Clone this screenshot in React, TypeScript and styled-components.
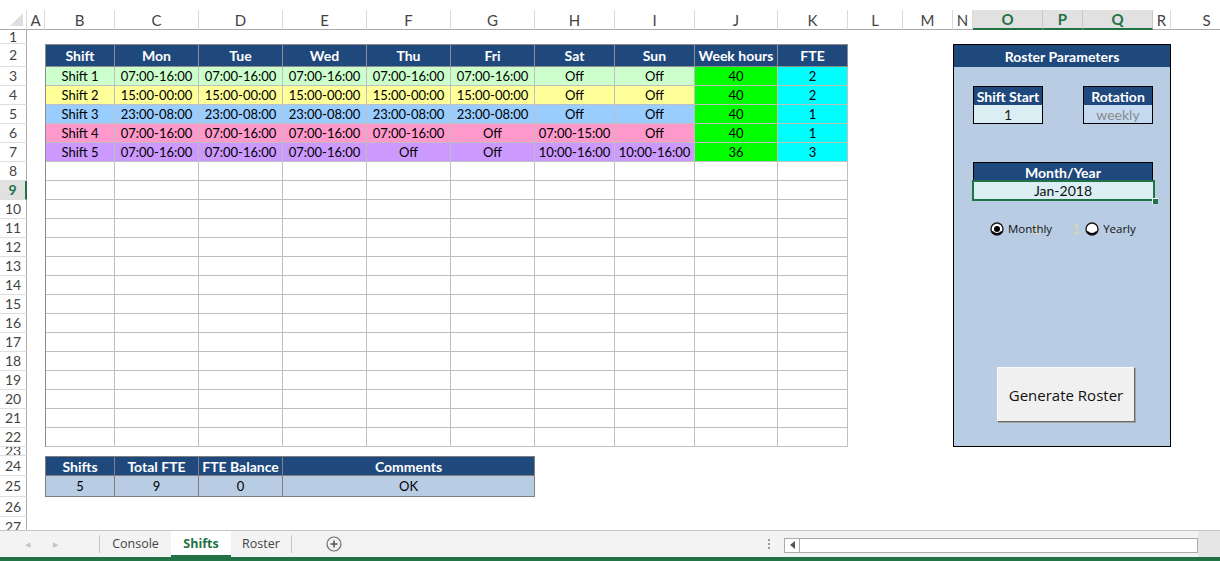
import React from 'react';
import styled, { createGlobalStyle } from 'styled-components';

const GlobalStyle = createGlobalStyle`
  html, body { margin: 0; padding: 0; background: #fff; }
  body {
    width: 1220px; height: 561px; overflow: hidden;
    font-family: Lato, "Liberation Sans", sans-serif;
  }
  #root { height: 100%; }
`;

const NAVY = '#1f497d';
const XL_GREEN = '#217346';

const COL_WIDTHS = [18, 70, 84, 84, 84, 84, 84, 80, 80, 83, 70, 55, 50, 20, 70, 40, 70, 18, 72];
const LETTERS = 'ABCDEFGHIJKLMNOPQRS'.split('');
const SELECTED_COLS = ['O', 'P', 'Q'];
const ROW_HEIGHTS = [14, 23, ...Array(20).fill(19), 9, 20, 21, 20, 20];
const SHEET_COLS = COL_WIDTHS.map((w) => `${w}px`).join(' ');
const SHEET_ROWS = ROW_HEIGHTS.map((h) => `${h}px`).join(' ');

type ShiftRow = { name: string; bg: string; days: string[]; hours: number; fte: number };

const T1 = '07:00-16:00';
const T2 = '15:00-00:00';
const T3 = '23:00-08:00';
const SHIFTS: ShiftRow[] = [
  { name: 'Shift 1', bg: '#ccffcc', days: [T1, T1, T1, T1, T1, 'Off', 'Off'], hours: 40, fte: 2 },
  { name: 'Shift 2', bg: '#ffff99', days: [T2, T2, T2, T2, T2, 'Off', 'Off'], hours: 40, fte: 2 },
  { name: 'Shift 3', bg: '#99ccff', days: [T3, T3, T3, T3, T3, 'Off', 'Off'], hours: 40, fte: 1 },
  { name: 'Shift 4', bg: '#ff99cc', days: [T1, T1, T1, T1, 'Off', '07:00-15:00', 'Off'], hours: 40, fte: 1 },
  { name: 'Shift 5', bg: '#cc99ff', days: [T1, T1, T1, 'Off', 'Off', '10:00-16:00', '10:00-16:00'], hours: 36, fte: 3 },
];
const HEADERS = ['Shift', 'Mon', 'Tue', 'Wed', 'Thu', 'Fri', 'Sat', 'Sun', 'Week hours', 'FTE'];

/* ---------- window frame ---------- */

const Window = styled.div`
  width: 1220px;
  height: 561px;
  display: flex;
  flex-direction: column;
  overflow: hidden;
`;

const Sheet = styled.div`
  height: 530px;
  flex-shrink: 0;
  overflow: hidden;
  padding-top: 10px;
  box-sizing: border-box;
`;

const HeaderRow = styled.div`
  display: grid;
  grid-template-columns: 27px ${SHEET_COLS};
  height: 20px;
`;

const Corner = styled.div`
  box-sizing: border-box;
  border-right: 1px solid #dadada;
  border-bottom: 1px solid #ababab;
  display: flex;
  align-items: flex-end;
  justify-content: flex-end;
  padding: 0 3px 3px 0;
`;

const CornerTriangle = styled.div`
  width: 0;
  height: 0;
  border-left: 13px solid transparent;
  border-bottom: 13px solid #dfdfdf;
`;

const ColHead = styled.div<{ $selected?: boolean }>`
  box-sizing: border-box;
  border-right: 1px solid ${(p) => (p.$selected ? '#c8c8c8' : '#dadada')};
  border-bottom: ${(p) => (p.$selected ? `2px solid ${XL_GREEN}` : '1px solid #ababab')};
  background: ${(p) => (p.$selected ? '#e1e1e1' : '#fff')};
  color: ${(p) => (p.$selected ? XL_GREEN : '#444')};
  font-weight: ${(p) => (p.$selected ? 700 : 400)};
  font-size: 15px;
  display: flex;
  align-items: center;
  justify-content: center;
  white-space: nowrap;
`;

const Body = styled.div`
  display: flex;
`;

const RowHeads = styled.div`
  width: 27px;
  flex-shrink: 0;
  display: grid;
  grid-template-rows: ${SHEET_ROWS};
`;

const RowHead = styled.div<{ $selected?: boolean }>`
  box-sizing: border-box;
  border-bottom: 1px solid #dedede;
  border-right: ${(p) => (p.$selected ? `2px solid ${XL_GREEN}` : '1px solid #ababab')};
  background: ${(p) => (p.$selected ? '#e1e1e1' : '#fff')};
  color: ${(p) => (p.$selected ? XL_GREEN : '#444')};
  font-weight: ${(p) => (p.$selected ? 700 : 400)};
  font-size: 14px;
  display: flex;
  align-items: center;
  justify-content: center;
  overflow: hidden;
  line-height: 1;
`;

const Canvas = styled.div`
  display: grid;
  grid-template-columns: ${SHEET_COLS};
  grid-template-rows: ${SHEET_ROWS};
`;

/* ---------- tables ---------- */

const ShiftGrid = styled.div`
  grid-column: 2 / 12;
  grid-row: 2 / 23;
  display: grid;
  grid-template-columns: 69px 84px 84px 84px 84px 84px 80px 80px 83px 70px;
  grid-template-rows: 22px repeat(20, 19px);
  border-left: 1px solid #8c8c8c;
  border-top: 1px solid #8c8c8c;
  box-sizing: border-box;
`;

const Cell = styled.div<{ $bg?: string; $line?: string }>`
  box-sizing: border-box;
  border-right: 1px solid ${(p) => p.$line ?? '#bfbfbf'};
  border-bottom: 1px solid ${(p) => p.$line ?? '#bfbfbf'};
  background: ${(p) => p.$bg ?? '#fff'};
  color: #000;
  font-size: 13px;
  display: flex;
  align-items: center;
  justify-content: center;
  white-space: nowrap;
  overflow: hidden;
`;

const HeadCell = styled(Cell)`
  background: ${NAVY};
  color: #fff;
  font-weight: 700;
  font-size: 14px;
`;

const SummaryGrid = styled.div`
  grid-column: 2 / 8;
  grid-row: 24 / 26;
  display: grid;
  grid-template-columns: 69px 84px 84px 252px;
  grid-template-rows: 19px 21px;
  border-left: 1px solid #7f7f7f;
  border-top: 1px solid #7f7f7f;
  box-sizing: border-box;
`;

/* ---------- parameters panel ---------- */

const Panel = styled.div`
  grid-column: 14 / 19;
  grid-row: 2 / 23;
  box-sizing: border-box;
  border: 1px solid #000;
  background: #b8cce4;
  display: grid;
  grid-template-columns: 19px 70px 40px 70px 17px;
  grid-template-rows: 22px repeat(19, 19px) 18px;
`;

const PanelTitle = styled.div`
  grid-column: 1 / -1;
  grid-row: 1;
  background: ${NAVY};
  color: #fff;
  font-weight: 700;
  font-size: 14px;
  display: flex;
  align-items: center;
  justify-content: center;
`;

const ParamBox = styled.div<{ $col: number }>`
  grid-column: ${(p) => p.$col};
  grid-row: 3 / 5;
  box-sizing: border-box;
  border: 1px solid #000;
  display: grid;
  grid-template-rows: 18px 18px;
`;

const BoxLabel = styled.div`
  background: ${NAVY};
  color: #fff;
  font-weight: 700;
  font-size: 14px;
  display: flex;
  align-items: center;
  justify-content: center;
  white-space: nowrap;
`;

const BoxValue = styled.div<{ $bg: string; $muted?: boolean }>`
  background: ${(p) => p.$bg};
  color: ${(p) => (p.$muted ? '#8a8a8a' : '#2a1a10')};
  font-size: 14px;
  display: flex;
  align-items: center;
  justify-content: center;
`;

const MonthBlock = styled.div`
  grid-column: 2 / 5;
  grid-row: 7 / 9;
  display: grid;
  grid-template-rows: 19px 19px;
`;

const MonthLabel = styled(BoxLabel)`
  box-sizing: border-box;
  border: 1px solid #000;
  border-bottom: none;
`;

const MonthValue = styled(BoxValue)`
  position: relative;
  color: #111;
`;

const Selection = styled.div`
  position: absolute;
  top: -1px;
  left: -1px;
  right: -2px;
  bottom: -1px;
  border: 2px solid ${XL_GREEN};
  pointer-events: none;
`;

const FillHandle = styled.div`
  position: absolute;
  right: -5px;
  bottom: -5px;
  width: 5px;
  height: 5px;
  background: ${XL_GREEN};
  border: 1px solid #fff;
  border-bottom: none;
  border-right: none;
`;

const RadioRow = styled.div`
  grid-column: 2 / 5;
  grid-row: 10;
  position: relative;
  display: grid;
  grid-template-columns: 70px 40px 70px;
`;

const FaintValue = styled.div`
  color: #dcd8ae;
  font-size: 14px;
  display: flex;
  align-items: center;
  justify-content: flex-end;
  padding-right: 3px;
`;

const RadioLayer = styled.div`
  position: absolute;
  inset: 0;
  display: flex;
  align-items: center;
  padding-left: 17px;
  gap: 33px;
  font-family: "Open Sans", "Noto Sans", sans-serif;
  font-size: 11.5px;
  color: #111;
`;

const RadioOption = styled.label`
  display: flex;
  align-items: center;
  gap: 4px;
`;

const GenerateButton = styled.button`
  grid-column: 2 / 5;
  grid-row: 17 / 21;
  align-self: start;
  justify-self: start;
  margin: 15px 0 0 24px;
  width: 138px;
  height: 55px;
  background: #f0f0f0;
  border: 1px solid;
  border-color: #fafafa #6b6b6b #6b6b6b #fafafa;
  box-shadow: 1px 1px 0 #a0a0a0;
  font-family: "Open Sans", "Noto Sans", sans-serif;
  font-size: 15px;
  color: #111;
  padding: 0;
`;

/* ---------- tab bar ---------- */

const TabBar = styled.div`
  height: 27px;
  flex-shrink: 0;
  box-sizing: border-box;
  border-top: 1px solid #c6c6c6;
  background: #f3f3f3;
  display: flex;
  align-items: stretch;
  font-family: "Open Sans", "Noto Sans", sans-serif;
  font-size: 12.5px;
  color: #444;
`;

const NavBox = styled.div`
  width: 99px;
  display: flex;
  align-items: center;
  padding-left: 25px;
  gap: 23px;
  box-sizing: border-box;
  color: #c4c4c4;
  font-size: 7px;
`;

const Divider = styled.div`
  width: 1px;
  background: #c6c6c6;
  margin: 4px 0 4px;
`;

const Tab = styled.div<{ $active?: boolean; $w: number }>`
  width: ${(p) => p.$w}px;
  box-sizing: border-box;
  display: flex;
  align-items: center;
  justify-content: center;
  background: ${(p) => (p.$active ? '#fff' : 'transparent')};
  color: ${(p) => (p.$active ? XL_GREEN : '#444')};
  font-weight: ${(p) => (p.$active ? 700 : 400)};
  border-bottom: 2px solid ${(p) => (p.$active ? XL_GREEN : 'transparent')};
  padding-top: 1px;
`;

const AddSheet = styled.div`
  margin-left: 34px;
  display: flex;
  align-items: center;
`;

const Dots = styled.div`
  margin-left: auto;
  width: 4px;
  display: flex;
  flex-direction: column;
  justify-content: center;
  align-items: center;
  gap: 2px;
  margin-right: 13px;
`;

const Dot = styled.span`
  width: 2px;
  height: 2px;
  background: #9a9a9a;
`;

const ScrollTrack = styled.div`
  width: 414px;
  height: 15px;
  align-self: center;
  margin-top: 2px;
  box-sizing: border-box;
  border: 1px solid #ababab;
  background: #fff;
  display: flex;
`;

const ScrollButton = styled.div`
  width: 15px;
  box-sizing: border-box;
  border-right: 1px solid #ababab;
  display: flex;
  align-items: center;
  justify-content: center;
`;

const ScrollFill = styled.div`
  width: 22px;
  background: #e6e6e6;
`;

const StatusStrip = styled.div`
  height: 4px;
  flex-shrink: 0;
  background: ${XL_GREEN};
`;

/* ---------- small drawings ---------- */

function Radio({ checked }: { checked?: boolean }) {
  return (
    <svg width="14" height="14" viewBox="0 0 14 14">
      <circle cx="7" cy="7" r="6" fill="#fff" stroke="#1a1a1a" strokeWidth="1.4" />
      <path d="M2.2 9.5 A6 6 0 0 0 11.8 9.5" fill="none" stroke="#000" strokeWidth="1.6" />
      {checked && <circle cx="7" cy="7" r="3" fill="#000" />}
    </svg>
  );
}

function PlusCircle() {
  return (
    <svg width="16" height="16" viewBox="0 0 16 16">
      <circle cx="8" cy="8" r="7" fill="none" stroke="#6a6a6a" strokeWidth="1.2" />
      <path d="M8 4.5v7M4.5 8h7" stroke="#555" strokeWidth="1.6" />
    </svg>
  );
}

function LeftTriangle() {
  return (
    <svg width="5" height="8" viewBox="0 0 5 8">
      <path d="M5 0 L0 4 L5 8 Z" fill="#555" />
    </svg>
  );
}

/* ---------- app ---------- */

export default function App() {
  const emptyRows = Array.from({ length: 15 });
  return (
    <>
      <GlobalStyle />
      <Window>
        <Sheet>
          <HeaderRow>
            <Corner>
              <CornerTriangle />
            </Corner>
            {LETTERS.map((l) => (
              <ColHead key={l} $selected={SELECTED_COLS.includes(l)}>
                {l}
              </ColHead>
            ))}
          </HeaderRow>
          <Body>
            <RowHeads>
              {ROW_HEIGHTS.map((_, i) => (
                <RowHead key={i} $selected={i + 1 === 9}>
                  {i + 1}
                </RowHead>
              ))}
            </RowHeads>
            <Canvas>
              <ShiftGrid>
                {HEADERS.map((h) => (
                  <HeadCell key={h} $line="#8c8c8c">
                    {h}
                  </HeadCell>
                ))}
                {SHIFTS.map((s) => (
                  <React.Fragment key={s.name}>
                    <Cell $bg={s.bg}>{s.name}</Cell>
                    {s.days.map((d, i) => (
                      <Cell key={i} $bg={s.bg}>
                        {d}
                      </Cell>
                    ))}
                    <Cell $bg="#00ff00">{s.hours}</Cell>
                    <Cell $bg="#00ffff">{s.fte}</Cell>
                  </React.Fragment>
                ))}
                {emptyRows.map((_, r) =>
                  HEADERS.map((h) => <Cell key={`${r}-${h}`} />)
                )}
              </ShiftGrid>

              <SummaryGrid>
                <HeadCell $line="#7f7f7f">Shifts</HeadCell>
                <HeadCell $line="#7f7f7f">Total FTE</HeadCell>
                <HeadCell $line="#7f7f7f">FTE Balance</HeadCell>
                <HeadCell $line="#7f7f7f">Comments</HeadCell>
                <Cell $bg="#b8cce4" $line="#7f7f7f">5</Cell>
                <Cell $bg="#b8cce4" $line="#7f7f7f">9</Cell>
                <Cell $bg="#b8cce4" $line="#7f7f7f">0</Cell>
                <Cell $bg="#b8cce4" $line="#7f7f7f">OK</Cell>
              </SummaryGrid>

              <Panel>
                <PanelTitle>Roster Parameters</PanelTitle>
                <ParamBox $col={2}>
                  <BoxLabel>Shift Start</BoxLabel>
                  <BoxValue $bg="#daeef3">1</BoxValue>
                </ParamBox>
                <ParamBox $col={4}>
                  <BoxLabel>Rotation</BoxLabel>
                  <BoxValue $bg="#c5d9f1" $muted>
                    weekly
                  </BoxValue>
                </ParamBox>
                <MonthBlock>
                  <MonthLabel>Month/Year</MonthLabel>
                  <MonthValue $bg="#daeef3">
                    Jan-2018
                    <Selection>
                      <FillHandle />
                    </Selection>
                  </MonthValue>
                </MonthBlock>
                <RadioRow>
                  <FaintValue>1</FaintValue>
                  <FaintValue>1</FaintValue>
                  <div />
                  <RadioLayer>
                    <RadioOption>
                      <Radio checked />
                      Monthly
                    </RadioOption>
                    <RadioOption>
                      <Radio />
                      Yearly
                    </RadioOption>
                  </RadioLayer>
                </RadioRow>
                <GenerateButton type="button">Generate Roster</GenerateButton>
              </Panel>
            </Canvas>
          </Body>
        </Sheet>

        <TabBar>
          <NavBox>
            <span>◀</span>
            <span>▶</span>
          </NavBox>
          <Divider />
          <Tab $w={71}>Console</Tab>
          <Tab $w={60} $active>
            Shifts
          </Tab>
          <Tab $w={60}>Roster</Tab>
          <Divider />
          <AddSheet>
            <PlusCircle />
          </AddSheet>
          <Dots>
            <Dot />
            <Dot />
            <Dot />
          </Dots>
          <ScrollTrack>
            <ScrollButton>
              <LeftTriangle />
            </ScrollButton>
          </ScrollTrack>
          <ScrollFill />
        </TabBar>
        <StatusStrip />
      </Window>
    </>
  );
}
